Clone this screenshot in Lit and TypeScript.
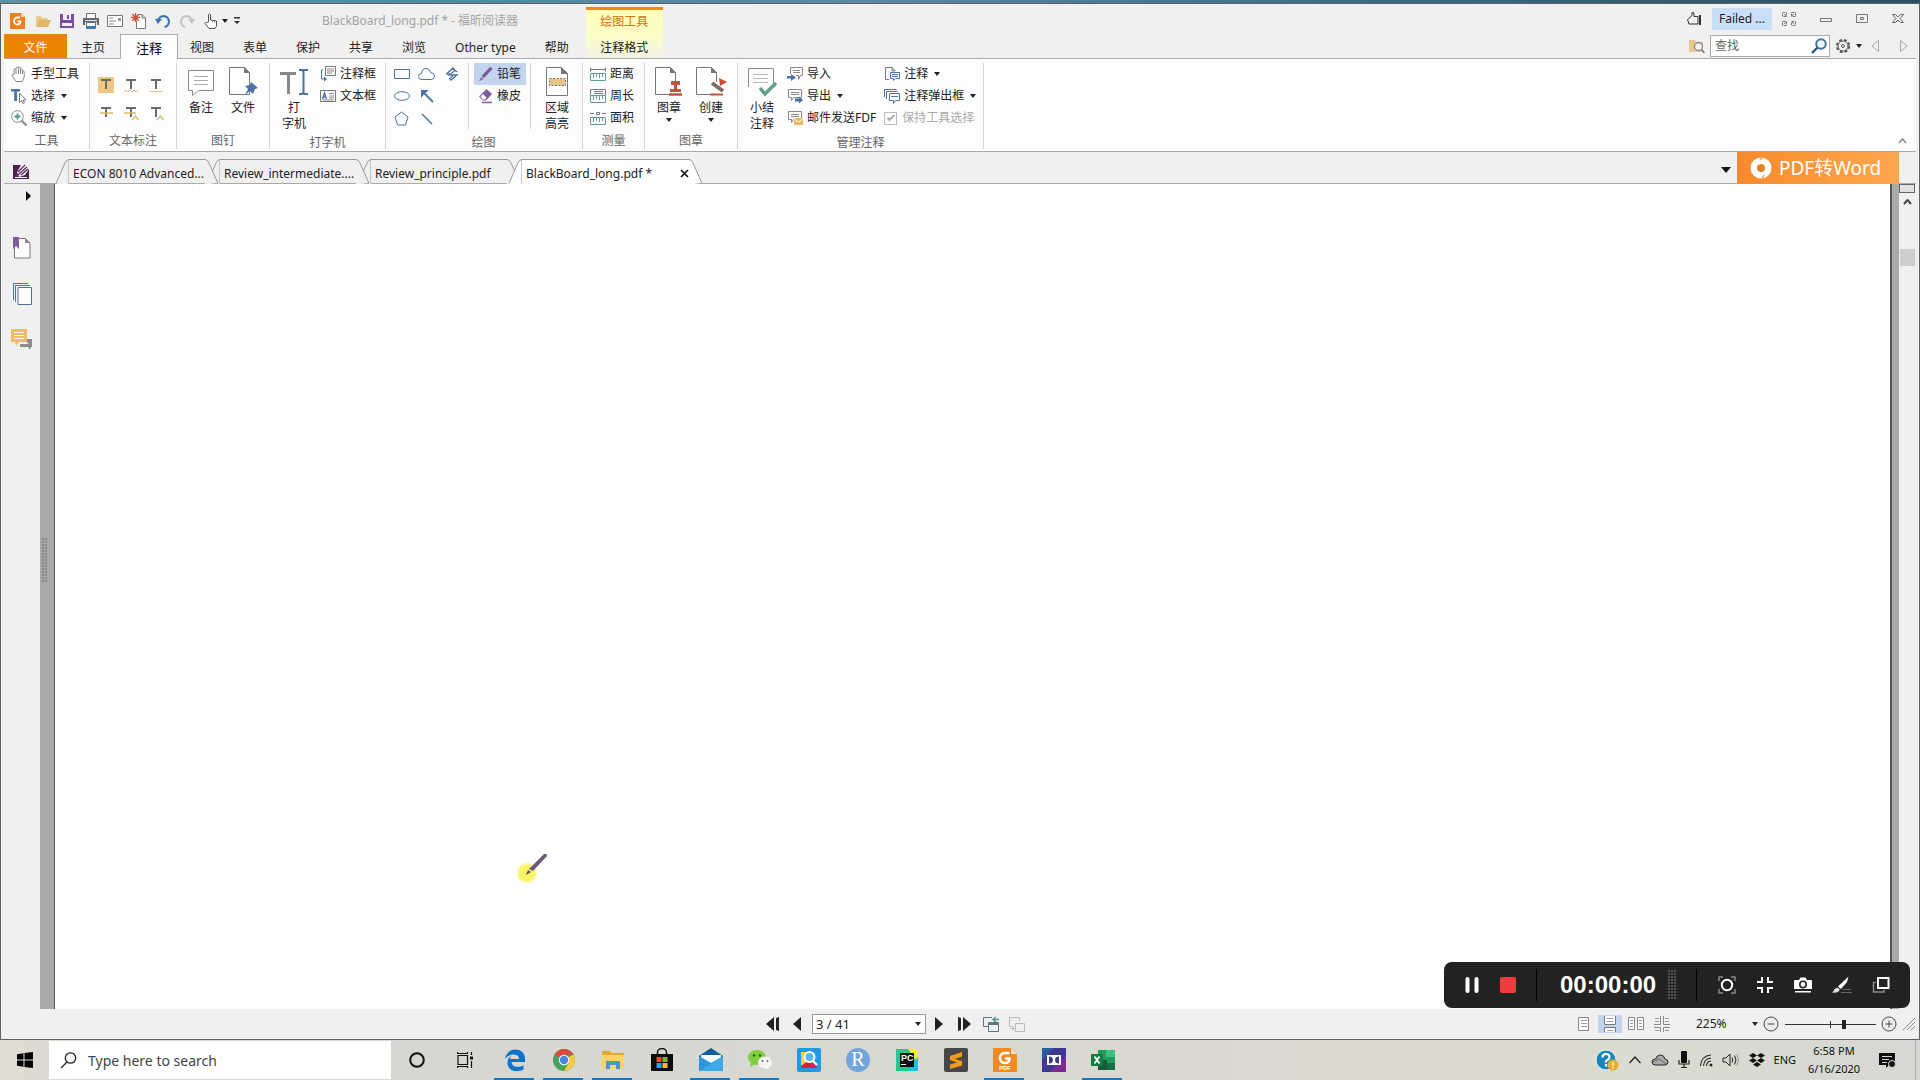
import { LitElement, html, svg, css, nothing, TemplateResult } from "lit";
import { customElement, state } from "lit/decorators.js";
import { classMap } from "lit/directives/class-map.js";

const icon = (w: number, h: number, body: unknown) =>
  html`<svg width=${w} height=${h} viewBox="0 0 ${w} ${h}" fill="none" aria-hidden="true">${body}</svg>`;

const caret = () => icon(6, 4, svg`<path d="M0 0h6L3 4z" fill="#222"/>`);

const G = "#6e6e6e";
const B = "#4a74a3";

/* ---- quick access icons ---- */
const foxitSmall = icon(18, 16, svg`
  <path d="M1 0h11l4 4v12H1z" fill="#ee7f1c"/><path d="M12 0v4h4z" fill="#fbd3a4"/>
  <path d="M11 4.500H8.500a3.500 3.500 0 0 0 0 7c2 0 3-1.200 3-3.200H8.500" stroke="#fff" stroke-width="1.800"/>`);
const folder = icon(16, 16, svg`
  <path d="M1 14V3h5l1 2h6v2" fill="#e9c98c"/><path d="M1 14 4 7h12l-3 7z" fill="#dfb568"/>`);
const save = icon(16, 16, svg`
  <path d="M1 1h14v14H1z" fill="#7c4f9e"/><path d="M4 1h8v6H4z" fill="#f4eefa"/><path d="M8 2h2v4H8z" fill="#7c4f9e"/><path d="M3 10h10v3H3z" fill="#f4eefa"/>`);
const print = icon(16, 16, svg`
  <path d="M3.500 5V.5h9V5" stroke="${G}" fill="#fff"/><path d="M0 5h16v7h-2V9H2v3H0z" fill="#666"/>
  <path d="M3.500 9.500h9v6h-9z" stroke="${B}" fill="#fff"/><path d="M2 7h12v1H2z" fill="#e8eef5"/><path d="M4 13h8v2H4z" fill="${B}"/>`);
const mail = icon(16, 16, svg`
  <path d="M.5 2.500h15v11H.5z" stroke="#777" fill="#fff"/><path d="M2 5h4M2 8h7M2 11h5" stroke="#888"/><path d="M11 5h3v3h-3z" fill="#999"/>`);
const newDoc = icon(16, 16, svg`
  <path d="M5.500 8v7.500h9V5L11 1.500H8" stroke="#777" fill="#fff"/><path d="M11 1.500V5h3.500" stroke="#777"/>
  <path d="M4.500 0v9M0 4.500h9M1.300 1.300l6.400 6.400M7.700 1.300 1.300 7.700" stroke="#c9502e" stroke-width="1.300"/>`);
const undo = icon(16, 16, svg`
  <path d="M3 8a5.500 5.500 0 1 1 6.500 6" stroke="#3b74b4" stroke-width="2.200"/><path d="M0 6h7l-4 5z" fill="#3b74b4"/>`);
const redo = icon(16, 16, svg`
  <path d="M13 8a5.500 5.500 0 1 0-6.500 6" stroke="#c3c5c7" stroke-width="2.200"/><path d="M16 6H9l4 5z" fill="#c3c5c7"/>`);
const touch = icon(16, 16, svg`
  <path d="M5.500 9V1.500q1-1.500 2 0V7l6 1v5l-1.500 2.500H6L2 10.500q0-1.500 1.500-1z" stroke="#555" fill="#fff"/><path d="M9.500 7v2M11.500 7.500v2" stroke="#777"/>`);
const moreCaret = icon(8, 8, svg`<path d="M1 0h6v1.500H1zM1 4h6L4 7z" fill="#333"/>`);

/* ---- header right ---- */
const thumb = icon(16, 16, svg`
  <path d="M1.500 8.500 6 4.500V1.500q2-1 2 1.500v2.500h4v7.500H3z" stroke="#333"/><path d="M13 4h2v10h-2z" fill="#333"/>`);
const expand = icon(14, 14, svg`
  <path d="M.5 4.500v-4h4v4zM9.500 4.500v-4h4v4zM.5 13.500v-4h4v4zM9.500 13.500v-4h4v4z" stroke="#777" stroke-dasharray="3 1"/><path d="m2 2 2 2M12 2l-2 2M2 12l2-2M12 12l-2-2" stroke="#777"/>`);
const minimize = icon(12, 12, svg`<path d="M.5 5.500h11v3H.5z" stroke="#777"/>`);
const restore = icon(12, 12, svg`<path d="M.5 1.500h11v8H.5z" stroke="#777"/><path d="M4.500 4.500h3v2h-3z" stroke="#777"/>`);
const closeWin = icon(12, 12, svg`<path d="M.5 1.500h3L6 4l2.500-2.500h3L8 5.500l3.500 4h-3L6 7 3.500 9.500h-3l3.500-4z" stroke="#666"/>`);
const folderFind = icon(16, 16, svg`
  <path d="M0 14V2h6l1 2h7v10z" fill="#e6c88f"/><circle cx="9.500" cy="8.500" r="4" fill="#f4f4f4" stroke="#888" stroke-width="1.300"/><path d="m12.500 11.500 3 3.500" stroke="#777" stroke-width="1.500"/>`);
const magnify = icon(16, 16, svg`
  <circle cx="10" cy="6" r="4.800" fill="#eef5fb" stroke="#3e7795" stroke-width="2"/><path d="M6.500 9.500 1 15" stroke="#35507c" stroke-width="2.400"/>`);
const gear = icon(16, 16, svg`
  <circle cx="8" cy="8" r="6.200" stroke="#555" stroke-width="1.800" stroke-dasharray="2.900 2"/><circle cx="8" cy="8" r="5" stroke="#555" fill="#f4f4f4"/><circle cx="8" cy="8" r="1.500" stroke="#555"/>`);
const triLeft = icon(9, 14, svg`<path d="M7.500 1.500v11L1 7z" stroke="#aaa"/>`);
const triRight = icon(9, 14, svg`<path d="M1.500 1.500v11L8 7z" stroke="#aaa"/>`);

/* ---- ribbon small icons ---- */
const hand = icon(16, 16, svg`
  <path d="M5 15.500 1 9.500q0-2 2-1V3.500q1-1.500 2 0V2q1-1.500 2 0V1.500q1.200-1.500 2.200 0V3q1.300-1 2 .5V5q1.800-.8 2 1v5l-2 4.500z" stroke="#888" fill="#fff"/><path d="M5 3.500V8M7.500 2.500V8M9.500 3V8M11.500 5v3" stroke="#888"/>`);
const selectI = icon(16, 16, svg`
  <path d="M0 1h9v2.500H6V13H3.200V3.500H0z" fill="${B}"/><path d="M8.500 5v9.500l2-2 1.500 3 1.500-.8L12 12h3z" stroke="#777" fill="#fff"/>`);
const zoomI = icon(16, 16, svg`
  <circle cx="6.500" cy="6.500" r="5.800" stroke="#888" fill="#fff"/><path d="M6.500 3.500v6M3.500 6.500h6" stroke="#4f9587" stroke-width="1.800"/><path d="m10.500 10.500 5 5" stroke="#888" stroke-width="2"/>`);
const noteFrame = icon(16, 16, svg`
  <path d="M5.500.5h10v9h-10z" stroke="#777" fill="#fff"/><path d="M7 3h7M7 5h7M7 7h5" stroke="#888"/><path d="M3 4H1.500v9H5" stroke="${B}"/><path d="M4 10.500v5L7 13z" fill="${B}"/>`);
const textFrame = icon(16, 16, svg`
  <path d="M.5 2.500h15v11H.5z" stroke="#777" fill="#fff"/><path d="m2.500 11 2-6 2 6M3 9h3" stroke="${B}" stroke-width="1.400"/><path d="M9 5.500h5M9 8h5M2.500 12h11M9 10h5" stroke="#888"/>`);
const rectI = icon(16, 12, svg`<path d="M.5 1.500h15v9H.5z" stroke="${B}"/>`);
const cloudI = icon(17, 14, svg`<path d="M4 12.500Q.5 12.500.5 9.500t3-3Q4 1.500 8 1.500t4.500 4q4 .5 4 3.500t-3 3.500z" stroke="${B}"/>`);
const polyline = icon(14, 14, svg`<path d="M1.500 7 8 1l2 2.500L4.500 8H12l-6 5-1.500-1.500L8 9" stroke="${B}" stroke-width="1.300"/><path d="M1.500 7H5M10 3.500 12.500 5" stroke="${B}" stroke-width="1.300"/>`);
const ellipseI = icon(16, 10, svg`<ellipse cx="8" cy="5" rx="7.500" ry="4.300" stroke="${B}"/>`);
const arrowI = icon(14, 14, svg`<path d="m3 3 10 10" stroke="${B}" stroke-width="1.800"/><path d="M1 1h8L6.500 3 3 6.500 1 9z" fill="${B}"/>`);
const pentagon = icon(15, 15, svg`<path d="m7.500 1 6.500 5-2.500 8h-8L1 6z" stroke="${B}"/>`);
const lineI = icon(13, 13, svg`<path d="m2 2 10 10" stroke="${B}" stroke-width="1.400"/>`);
const pencil = icon(16, 16, svg`
  <path d="m3.500 10 8-8.500q2-1 3 1.500l-8.500 9z" fill="#7b5796"/><path d="m3 11 2.500 2L1 15.500z" fill="#8c6ea3"/>`);
const eraser = icon(16, 16, svg`
  <path d="m1 8.500 7.500-7.500L14 6l-6 6.500H5z" fill="#8159a0"/><path d="M2.500 8.500 5 6l3.500 3.500L7 11.500H5z" fill="#fff"/><path d="M4 14.500h10" stroke="#8159a0" stroke-width="1.500"/>`);
const T = "#6b6b6b";
const tBtn = (extra: unknown, box = false) => icon(16, 16, svg`
  ${box ? svg`<path d="M0 0h16v16H0z" fill="#f0c683"/>` : nothing}
  <path d="M3 2h10v2H9v8H7V4H3z" fill="${T}"/>${extra}`);
const tHigh = tBtn(nothing, true);
const tSquig = tBtn(svg`<path d="m1 15 2-2 2 2 2-2 2 2 2-2 2 2 2-2" stroke="#d8bb7d"/>`);
const tUnder = tBtn(svg`<path d="M2 14.500h13" stroke="#e0c68d"/>`);
const tStrike = tBtn(svg`<path d="M2 8h13" stroke="#dcb765" stroke-width="1.500"/>`);
const tReplace = tBtn(svg`<path d="M1 8h12" stroke="#dcb765" stroke-width="1.500"/><path d="m9 15 3.500-4 3 4" stroke="#d9b86e" stroke-width="1.300"/>`);
const tInsert = tBtn(svg`<path d="m9 15 3.500-4 3 4" stroke="#d9b86e" stroke-width="1.300"/>`);
const ruler = (top: unknown) => icon(16, 14, svg`${top}<path d="M.5 6.500h15v7H.5z" stroke="#5f9d90"/><path d="M3.500 7v4M6.500 7v3M9.500 7v4M12.500 7v3" stroke="#5f9d90"/>`);
const distance = ruler(svg`<path d="M.5.5v4M15.500.5v4M1 2.500h14" stroke="#777"/>`);
const perimeter = ruler(svg`<path d="M.5 6V.5h15V6M4 2.500h9M4 4.500h9" stroke="#777"/>`);
const area = ruler(svg`<path d="M0 2.500h4M12 2.500h4M6.500 1.500h3v2h-3z" stroke="#777"/>`);
const bubble = svg`<path d="M1.500 1.500h13v8h-8l-2 3v-3h-3z" stroke="#888" fill="#fff"/><path d="M4 4.500h8M4 6.500h8" stroke="#888"/>`;
const importI = icon(16, 16, svg`
  <path d="M3.500 8V1.500h12v8h-2l-2 4v-4H9" stroke="#888"/><path d="M6 4.500h7M6 6.500h7" stroke="#888"/><path d="M0 10h4V8l5 3.500L4 15v-2.500H0z" fill="${B}"/>`);
const exportI = icon(16, 16, svg`${bubble}<path d="M8 10.500h4V8.500l4 3.500-4 3.500v-2H8z" fill="${B}"/>`);
const mailFdf = icon(16, 16, svg`${bubble}<path d="M7 8h9v7H7z" fill="#e9b95c"/><path d="m7 9 4.500 3L16 9" stroke="#fff"/>`);
const notesI = icon(16, 16, svg`
  <path d="M5 13.500H1.500v-12H8L11.500 5" stroke="#777"/><path d="M8 1.500V5h3" stroke="#777"/><path d="M6.500 6.500h9v6h-4l-2 2v-2h-3z" stroke="${B}" fill="#fff"/><path d="M8 8.500h6M8 10.500h6" stroke="${B}"/>`);
const popups = icon(16, 16, svg`
  <path d="M.5 9V1.500h12M2.500 11V3.500h11" stroke="${B}"/><path d="M5.500 5.500h10v7h-4l-2 3v-3h-4z" stroke="${B}" fill="#fff"/><path d="M7 8.500h7" stroke="${B}"/>`);

/* ---- ribbon large icons ---- */
const page = svg`<path d="M1.500 1.500h15l5 5v22h-20z" stroke="#777" fill="#fff"/><path d="M16 1v6h6z" fill="#777"/>`;
const memo = icon(28, 32, svg`
  <path d="M1.500 4.500h25v20h-15l-6 5v-5h-4z" stroke="#888" fill="#fff"/><path d="M7 10.500h14M7 14.500h14M7 18.500h14" stroke="#aaa"/>`);
const attach = icon(30, 32, svg`
  ${page}<path d="m23 16 7 6-3 1-2 5-3-3-5 4 3-6-3-3 5-1z" fill="${B}"/>`);
const typewriter = icon(30, 32, svg`
  <path d="M1 7.500h16M9.500 8v20" stroke="#888" stroke-width="3"/><path d="M20 4h3l1 1 1-1h4M20 28h3l1-1 1 1h4M24.500 5v22" stroke="${B}" stroke-width="2"/>`);
const areaHi = icon(24, 32, svg`
  <path d="M1.500 1.500h15l6 6v22h-21z" stroke="#777" fill="#fff"/><path d="M16 1v7h7z" fill="#777"/>
  <path d="M4.500 12.500h16v7h-16z" fill="#e8c582" stroke="#777" stroke-dasharray="2 1.500"/>`);
const stamp = icon(30, 32, svg`
  ${page}<path d="M15 15h12v14H15z" fill="#fff"/><path d="M17 15h9v4h-3v4h4v3H16v-3h4v-4h-3z" fill="#c4523f"/><path d="M15 28.500h13" stroke="#c4523f" stroke-width="2.500"/>`);
const createStamp = icon(32, 32, svg`
  <path d="M1.500 1.500h15l5 5v22h-20z" stroke="#777" fill="#fff"/><path d="M16 1v6h6z" fill="#777"/>
  <path d="M15 16h12v13H15z" fill="#fff"/><path d="m24 12 8 4-7 4z" fill="#cf4b33"/><path d="m17 17 11 8" stroke="#7d6a64" stroke-width="4"/><path d="M15 28.500h13" stroke="#b9553f" stroke-width="2"/>`);
const summary = icon(30, 32, svg`
  <path d="M1.500 21V2.500h25V17" stroke="#888"/><path d="M6 8.500h15M6 12.500h15M6 16.500h15" stroke="#bbb"/><path d="m13 22 5 6L29 17" stroke="#5f9d8a" stroke-width="3.500"/>`);

/* ---- side rail ---- */
const bookmark = icon(18, 22, svg`
  <path d="M1.500 1.500h11l4.500 4.500v15H1.500z" stroke="#777" fill="#fff"/><path d="M12 1v5h5z" fill="#888"/><path d="M0 0h6v12l-3-3-3 3z" fill="#7c5c9c"/>`);
const pages = icon(19, 22, svg`
  <path d="M.5 17V.5H15M2.500 19V2.500H17" stroke="${B}"/><path d="M5 4.500h13.500v17H5z" stroke="${B}" fill="#fff"/>`);
const comments = icon(22, 22, svg`
  <path d="M12 10h9v8h-1l-1 3-2-3H9v-3h9z" fill="#8b8b8b"/><path d="M0 0h16v13H8l-3 4-1-4H0z" fill="#ecbb66"/><path d="M3 3.500h10M3 6.500h10M3 9.500h10" stroke="#fff"/>`);
const signPen = icon(18, 16, svg`
  <path d="M1 1h8L5 8l2 5 6-2 4-6v10H1z" fill="#4e2050"/><path d="m6 8 7-7M7 10l8-7M9 11l7-6M3 13l4-3" stroke="#5d2d61" stroke-width="1.300"/><path d="M3 13.500h12" stroke="#fff"/>`);
const convert = icon(24, 24, svg`
  <circle cx="12" cy="12" r="10.500" fill="#fff"/><circle cx="12" cy="12" r="4" fill="#e0822c"/><path d="M12 0v6M13 24l2-5" stroke="#ff9a3c" stroke-width="1.500"/><path d="m10 3 5 3-5 3z" fill="#fff"/>`);

/* ---- status bar ---- */
const navFirst = icon(13, 14, svg`<path d="M8 0v14L0 7zM10 1l3-1v14l-3-1z" fill="#222"/>`);
const navPrev = icon(8, 14, svg`<path d="M8 0v14L0 7z" fill="#222"/>`);
const navNext = icon(8, 14, svg`<path d="M0 0v14l8-7z" fill="#222"/>`);
const navLast = icon(13, 14, svg`<path d="M5 0v14l8-7zM3 1 0 0v14l3-1z" fill="#222"/>`);
const viewBack = icon(16, 16, svg`<path d="M5 10.500H.5v-9H9M5.500 6.500h10v9h-10z" stroke="#5d7686"/><path d="M6 7h9v2H6z" fill="#5d7686"/><path d="M16 3.500h-5M13 1l-3 2.500L13 6" stroke="#4f9587" stroke-width="1.500"/>`);
const viewFwd = icon(16, 16, svg`<path d="M4 10.500H.5v-9h10V5M6.500 7.500h9v8h-9z" stroke="#bbb"/><path d="M1 12.500h4M3.500 10.500l2 2-2 2" stroke="#bbb"/>`);
const lines = (x: number, y: number, n: number, w: number) =>
  Array.from({ length: n }, (_, i) => svg`<path d="M${x} ${y + i * 3}h${w}" stroke="#999"/>`);
const single = icon(12, 16, svg`<path d="M.5 1.500h10v13H.5z" stroke="#888" fill="#fff"/>${lines(3, 4.5, 3, 6)}`);
const continuous = icon(12, 16, svg`<path d="M.5 0v8.500h11V0M.5 16v-4.500h11V16" stroke="#777" fill="#fff"/>${lines(3, 2.5, 2, 6)}<path d="M3 14.500h6" stroke="#999"/>`);
const facing = icon(16, 16, svg`<path d="M.5 1.500h6v12h-6zM9.500 1.500h6v12h-6z" stroke="#888" fill="#fff"/>${lines(2, 4.5, 3, 3)}${lines(11, 4.5, 3, 3)}`);
const facingCont = icon(16, 16, svg`<path d="M0 8.500h6.500V0M16 8.500H9.500V0M0 11.500h6.500V16M16 11.500H9.500V16" stroke="#888"/>${lines(1, 2.5, 2, 4)}${lines(11, 2.5, 2, 4)}${lines(1, 14.5, 1, 4)}${lines(11, 14.5, 1, 4)}`);
const minus = icon(16, 16, svg`<circle cx="8" cy="8" r="7" stroke="#444"/><path d="M4.500 8h7" stroke="#444"/>`);
const plus = icon(16, 16, svg`<circle cx="8" cy="8" r="7" stroke="#444"/><path d="M4.500 8h7M8 4.500v7" stroke="#444"/>`);
const sizeGrip = icon(12, 12, svg`<path d="M0 12 12 0M4 12l8-8M8 12l4-4" stroke="#888"/>`);

/* ---- recorder ---- */
const pause = icon(14, 16, svg`<path d="M2.500 2v12M11.500 2v12" stroke="#fff" stroke-width="4" stroke-linecap="round"/>`);
const stop = icon(16, 16, svg`<rect width="16" height="16" rx="2" fill="#f23b3f"/>`);
const focus = icon(18, 18, svg`<circle cx="9" cy="9" r="5.200" stroke="#fff" stroke-width="2"/><path d="M1 5V1h4M13 1h4v4M17 13v4h-4M5 17H1v-4" stroke="#888" stroke-width="1.500"/>`);
const shrink = icon(18, 18, svg`<path d="M6 1v5H1M12 1v5h5M6 17v-5H1M12 17v-5h5" stroke="#fff" stroke-width="2"/>`);
const camera = icon(18, 16, svg`<path d="M1 3h4l1.500-2.500h5L13 3h4q1 0 1 1v8H0V4q0-1 1-1zM1 14h16v1.500H1z" fill="#fff"/><circle cx="9" cy="7.500" r="3.200" fill="#fff" stroke="#222" stroke-width="1.600"/>`);
const brush = icon(20, 18, svg`<path d="M16.500.5 15 6l-6 7-3-2.500z" fill="#fff"/><path d="M5.500 11.500 8 13.500l-2 2.500q-3 1-6 .500 2-1 2.500-3.500z" fill="#ddd"/><path d="M11 13.500h8M9 16.500h11" stroke="#666"/>`);
const windows = icon(18, 16, svg`<path d="M6 1h10.500v10H6z" stroke="#fff" stroke-width="2"/><path d="M4 5.500H1.500V15H12v-2" stroke="#888" stroke-width="1.500"/>`);

/* ---- task bar ---- */
const winLogo = icon(16, 16, svg`<path d="M0 2.200 6.500 1.300v6.200H0zM7.500 1.100 16 0v7.500H7.500zM0 8.500h6.500v6.200L0 13.800zM7.500 8.500H16V16l-8.500-1.100z" fill="#000"/>`);
const searchI = icon(17, 17, svg`<circle cx="10.500" cy="6" r="5.200" stroke="#222" stroke-width="1.300"/><path d="m7 10-6 6" stroke="#222" stroke-width="1.300"/>`);
const cortana = icon(16, 16, svg`<circle cx="8" cy="8" r="6.800" stroke="#111" stroke-width="2"/>`);
const taskView = icon(17, 16, svg`<path d="M1 3.500h9.500v9H1zM.5 0v2M10.500 0v2M0 1.500h11M.5 16v-2M10.500 16v-2M0 14.500h11M14.500 0v3M14.500 9v7" stroke="#111" stroke-width="1.200"/><path d="M13 4.500h3v3h-3z" fill="#111"/>`);
const edge = icon(22, 22, svg`
  <path d="M1 10C2 4 6 .5 11.500.5 18 .5 21 5 21 9.500V13H7.500c.3 3.300 3 4.800 6 4.800 2.300 0 4.300-.6 6-1.600v4.300c-2 1.100-4.400 1.500-7 1.500-5.500 0-9-3.300-9-8 0-3.700 1.800-6.300 5-7.800-1.700 1-2.200 2.600-2.400 3.800H15c0-2.600-1.400-4.300-4.300-4.300C6.800 5.200 3.300 7 1 10z" fill="#0b73cf"/>`);
const chrome = icon(22, 22, svg`
  <circle cx="11" cy="11" r="11" fill="#4aa35a"/><path d="M11 11 1.500 5.500A11 11 0 0 1 20.500 5.500H11z" fill="#dd4a3c"/><path d="M11 11l9.500-5.500A11 11 0 0 1 11 22l4.500-8z" fill="#f6cb45"/><path d="M11 5.500h9.500l-.5-1H11z" fill="#dd4a3c"/>
  <circle cx="11" cy="11" r="5.200" fill="#fff"/><circle cx="11" cy="11" r="4.200" fill="#4f83e2"/>`);
const explorer = icon(22, 20, svg`
  <path d="M0 1h8l1 2h13v3H0z" fill="#e5a92b"/><path d="M0 5h22v14H0z" fill="#f8d566"/><path d="M4 19v-8h14v8h-4v-4H8v4z" fill="#4c97c4"/>`);
const store = icon(24, 24, svg`
  <path d="M7.500 6V4.500a4.500 4 0 0 1 9 0V6" stroke="#111" stroke-width="1.500"/><path d="M1 6h22v17H1z" fill="#0b0b0b"/>
  <path d="M6.500 9h5v5h-5z" fill="#e8502f"/><path d="M12.500 9h5v5h-5z" fill="#7cb928"/><path d="M6.500 15h5v5h-5z" fill="#2aa1e8"/><path d="M12.500 15h5v5h-5z" fill="#f6b82c"/>`);
const mailApp = icon(24, 24, svg`
  <path d="M0 8 12 0l12 8v3H0z" fill="#155a9c"/><path d="M2 7h20v7H2z" fill="#f6fafd"/><path d="M0 8l12 7 12-7v15H0z" fill="#2a97e0"/><path d="M24 8v15H0z" fill="#43b4ee" fill-opacity=".7"/>`);
const wechat = icon(24, 20, svg`
  <ellipse cx="9" cy="7.500" rx="9" ry="7.500" fill="#7fcf3f"/><path d="m3 12-1 5 5-3z" fill="#7fcf3f"/><circle cx="6" cy="5.500" r="1.200" fill="#2c5a12"/><circle cx="12" cy="5.500" r="1.200" fill="#2c5a12"/>
  <ellipse cx="17" cy="12.500" rx="7" ry="6" fill="#f4f4f4"/><path d="m20 16 1 4-4-2z" fill="#f4f4f4"/><circle cx="14.500" cy="11" r="1" fill="#666"/><circle cx="19.500" cy="11" r="1" fill="#666"/>`);
const finder = icon(24, 24, svg`
  <rect width="24" height="24" rx="2" fill="#2497e3"/><path d="M4 4h5v13H4z" fill="#f7d230"/><path d="M4 20q2-6 8-6t8 6z" fill="#dc1f3e"/>
  <circle cx="12.500" cy="9" r="5" fill="#58b4ee" stroke="#fff" stroke-width="2"/><path d="m16 13 4 4" stroke="#fff" stroke-width="2.400"/>`);
const rBadge = icon(24, 24, svg`
  <circle cx="12" cy="12" r="12" fill="#73a5dc"/><text x="12" y="18" text-anchor="middle" class="serif" fill="#fff">R</text>`);
const pycharm = icon(22, 22, svg`
  <path d="M0 0h14l8 4v18H0z" fill="#22c98a"/><path d="M12 0h10v14z" fill="#f2ea4a"/><path d="M22 8v14H12z" fill="#21bdea"/><path d="M4 4h14v14H4z" fill="#0b0b0b"/>
  <text x="5" y="12" class="tiny" fill="#fff">PC</text><path d="M5 15.500h5" stroke="#fff"/>`);
const sublime = icon(24, 24, svg`
  <rect width="24" height="24" rx="2" fill="#474747"/><path d="m6 8 12-4v4.500L11 11l7 2v4.500L6 21v-4.500l7-2L6 12z" fill="#f79a1c"/>`);
const foxitApp = icon(24, 24, svg`
  <path d="M0 0h18l6 6v18H0z" fill="#ef8a25"/><path d="M18 0v6h6z" fill="#fbe0c0"/>
  <path d="M16.500 5H12a5 5 0 0 0 0 10c3 0 4.500-2 4.500-4.500H12" stroke="#fff" stroke-width="2.600"/><text x="12" y="22" text-anchor="middle" class="tiny pdf" fill="#fff">PDF</text>`);
const dolby = icon(24, 24, svg`
  <path d="M0 0h24v24H0z" fill="#3f3792"/><path d="M0 0h12L0 12z" fill="#2b5ca0"/><path d="M24 8v16H8z" fill="#7c2b8d"/>
  <path d="M5 7h14v10H5z" fill="#fff"/><path d="M7 8.500q4 0 4 3.500t-4 3.500zM17 8.500q-4 0-4 3.500t4 3.500z" fill="#3f3792"/>`);
const excel = icon(24, 22, svg`
  <path d="M7 1h17v20H7z" fill="#1f9c5c"/><path d="M15 1h9v7h-9z" fill="#35c481"/><path d="M7 11h9v10H7z" fill="#175a36"/><path d="M16 14h8v7h-8z" fill="#147243"/><path d="M0 5h12v12H0z" fill="#107c41"/>
  <path d="m3.500 7.500 5 7M8.500 7.500l-5 7" stroke="#fff" stroke-width="1.800"/>`);
const help = icon(24, 22, svg`
  <circle cx="11" cy="11" r="10" fill="#1687bd" stroke="#e6f3fa"/>
  <path d="M7.500 8.500q0-3.500 3.500-3.500t3.500 3q0 2-2 3t-1.500 2.500M11 15v2.500" stroke="#fff" stroke-width="2.200"/>
  <circle cx="18" cy="16" r="5.500" fill="#e8ae2c"/><path d="M18 13v4M18 18v1.200" stroke="#fff" stroke-width="1.400"/>`);
const chevUp = icon(14, 8, svg`<path d="m1.500 7 5.500-6 5.500 6" stroke="#222" stroke-width="1.300"/>`);
const cloud = icon(18, 12, svg`<path d="M4.500 11Q1 11 1 8t3.500-3Q6 1 9.500 1T14 5q3 .5 3 3t-3 3z" fill="#a9a9a9" stroke="#222"/><path d="M2 8 8 5l7 5" stroke="#666"/>`);
const mic = icon(12, 18, svg`<rect x="3" width="6" height="12" rx="1" fill="#111"/><path d="M1 9v4h10V9M6 13v4M3 16.500h6" stroke="#222" stroke-width="1.200"/>`);
const wifi = icon(14, 14, svg`<circle cx="12" cy="12" r="1.500" fill="#222"/><path d="M12 8q-4 0-4.500 5M12 5Q5 5.500 4.500 13M12 2Q2 3 1.500 13" stroke="#222" stroke-width="1.100"/>`);
const sound = icon(18, 14, svg`<path d="M1 5h3l4-4v12L4 9H1z" stroke="#222"/><path d="M10 4.500q1.500 2.500 0 5M12.500 2.500q3 4.500 0 9" stroke="#222"/><path d="M15 1q3 6 0 12" stroke="#999"/>`);
const dropbox = icon(16, 14, svg`<path d="m4 0 4 2.500L4 5 0 2.500zM12 0l4 2.500L12 5 8 2.500zM4 5l4 2.500L4 10 0 7.500zM12 5l4 2.500-4 2.500-4-2.500zM8 9l4 2.500L8 14l-4-2.500z" fill="#111"/>`);
const notify = icon(17, 17, svg`<path d="M0 1h16v12h-6l-3 3v-3H0z" fill="#111"/><path d="M3 4.500h10M3 7.500h7M3 10.500h5" stroke="#d8d8d4"/><circle cx="13" cy="12" r="3.500" fill="#111" stroke="#d8d8d4"/>`);

interface Tool { icon: TemplateResult; label: string; caret?: boolean; active?: boolean; }

const small = (t: Tool) => html`
  <button class=${classMap({ tool: true, active: !!t.active })}>${t.icon}<span>${t.label}</span>${t.caret ? caret() : nothing}</button>`;
const large = (i: TemplateResult, rows: string[], drop = false) => html`
  <button class="large">${i}${rows.map((r) => html`<span>${r}</span>`)}${drop ? caret() : nothing}</button>`;
const iconBtn = (i: TemplateResult, label: string) => html`<button class="ico" aria-label=${label}>${i}</button>`;
const group = (name: string, cls: string, body: unknown) => html`
  <section class="group ${cls}"><div class="body">${body}</div><h2>${name}</h2></section>`;

@customElement("app-root")
export class AppRoot extends LitElement {
  @state() private zoom = 65;

  static styles = css`
    :host { display: flex; flex-direction: column; height: 100vh; position: relative; overflow: hidden;
      font: 12px/16px "Noto Sans", "Noto Sans CJK SC", sans-serif; color: #222;
      background: linear-gradient(90deg, #5b93a3, #4c8ba0 25%, #5c87a5 45%, #39677f 75%, #2a5262 100%); }
    *, *::before { box-sizing: border-box; }
    button, input, select { font: inherit; color: inherit; margin: 0; padding: 0; border: 0; background: none; border-radius: 0; }
    button { display: inline-flex; align-items: center; justify-content: center; white-space: nowrap; }
    svg { display: block; flex: none; }
    h1, h2 { margin: 0; font: inherit; }
    .window { flex: 1; min-height: 0; display: flex; flex-direction: column; margin-top: 3px;
      border: 1px solid #5a6266; background: #f0f0f0; }

    header { display: flex; height: 54px; margin: 0 3px; flex: none; }
    .left { display: flex; flex-direction: column; }
    .titlebar { display: flex; align-items: center; height: 30px; padding: 4px 0 0 5px; }
    .quick { display: flex; align-items: center; gap: 8px; }
    .quick .drop { gap: 3px; }
    .quick .ico:last-child { margin-left: -3px; }
    h1 { margin-left: 81px; color: #a3a3a3; white-space: nowrap; }
    .tabs { display: flex; flex: 1; }
    .tabs button { padding: 3px 14px 0; margin-right: 1px; }
    .tabs .file { width: 63px; margin-right: 0; background: #e98300; color: #fff; }
    .tabs .current { position: relative; font-size: 13px; width: 58px; padding: 2px 0 0; margin: 0 -2px -1px 0; background: #fdfdfd; border: 1px solid #aaa; border-bottom: 0; color: #000; }
    .context { display: flex; flex-direction: column; align-items: center; width: 77px; margin: 3px 0 0 2px;
      border-top: 3px solid #e98a17; background: linear-gradient(#ffffb9, #fdfdc6 50%, #f2f2e6); }
    .context span { line-height: 24px; color: #dd6b10; }
    .context button { flex: 1; padding-top: 3px; }
    .right { margin-left: auto; display: flex; flex-direction: column; }
    .winctl { display: flex; align-items: center; justify-content: flex-end; height: 26px; padding: 3px 12px 0 0; gap: 24px; }
    .winctl .account { height: 22px; width: 60px; margin: 0 -14px; background: #c8def9; }
    .find { display: flex; align-items: center; justify-content: flex-end; flex: 1; gap: 5px; padding: 3px 8px 0 0; }
    .box { display: flex; align-items: center; width: 120px; height: 22px; border: 1px solid #aaa; background: #fff; padding: 0 2px 0 4px; }
    .box input { flex: 1; min-width: 0; outline: 0; }
    .box input::placeholder { color: #666; opacity: 1; }
    .find .next { margin-left: 14px; }
    .find .prev { margin-left: 4px; }

    .ribbon { display: flex; flex: none; height: 94px; margin: 0 3px; padding: 4px 0 2px; background: #fdfdfd;
      border-top: 1px solid #aaa; border-bottom: 1px solid #aaa; }
    .group { display: flex; flex-direction: column; border-right: 1px solid #d4d4d4; padding: 0 7px; }
    .group h2 { line-height: 18px; padding-top: 2px; margin-bottom: -1px; text-align: center; color: #666; }
    .body { flex: 1; display: flex; }
    .stack { display: flex; flex-direction: column; align-items: flex-start; }
    .tool { height: 22px; gap: 4px; }
    .tool > svg:last-child:not(:first-child) { margin-left: 2px; }
    .active { background: #c2d4f0; }
    .large { flex-direction: column; justify-content: flex-start; padding-top: 3px; width: 42px; }
    .large span { line-height: 16px; }
    .large svg:first-child { margin-bottom: 2px; }
    .large svg:last-child { margin-top: 2px; }
    .g-tool { width: 86px; }
    .g-text { width: 87px; }
    .g-pin { width: 93px; padding: 0 3px; }
    .g-type { width: 116px; padding: 0 3px; }
    .g-draw { width: 197px; padding: 0 4px 0 3px; }
    .g-measure { width: 62px; }
    .g-stamp { width: 93px; padding: 0 3px; }
    .g-manage { width: 246px; padding: 0 3px; }
    .g-type .stack { margin-left: 5px; }
    .g-manage .stack { margin-left: 4px; }
    .g-manage .stack + .stack { margin-left: 8px; }
    .marks { display: grid; grid-template-columns: repeat(3, 25px); grid-template-rows: 28px 28px; padding-top: 8px; margin-left: -4px; }
    .shapes { display: grid; grid-template-columns: repeat(3, 25px); grid-template-rows: repeat(3, 22px); }
    .rule { width: 1px; height: 66px; background: #d4d4d4; margin: 0 5px 0 4px; }
    .g-draw .tool { padding: 0 5px 0 4px; gap: 3px; }
    .g-draw .large { margin: 0 auto; }
    .keep { display: flex; align-items: center; height: 22px; gap: 5px; color: #aaa; }
    .keep input { appearance: none; width: 13px; height: 13px; border: 1px solid #bbb; background: #fff; display: grid; place-items: center; }
    .keep input::before { content: ""; width: 8px; height: 4px; border: solid #aaa; border-width: 0 0 2px 2px; rotate: -45deg; translate: 0 -1px; }
    .fold { margin: auto 9px 5px auto; }

    .docs { display: flex; align-items: flex-end; flex: none; height: 32px; margin: 0 3px; position: relative; border-bottom: 1px solid #aaa; }
    .docs > .pen { align-self: center; margin: 8px 26px 0 8px; }
    .doc { display: flex; width: 162px; height: 25px; margin: 0 -11px -1px 0; position: relative; --face: #f0f0f0; }
    .doc:nth-of-type(1) { z-index: 3; }
    .doc:nth-of-type(2) { z-index: 2; }
    .doc:nth-of-type(3) { z-index: 1; }
    .doc.front { width: 193px; z-index: 4; --face: #fff; }
    .doc .face { flex: 1; min-width: 0; display: flex; align-items: center; justify-content: space-between; padding-top: 4px;
      border-top: 1px solid #999; border-bottom: 1px solid #aaa; background: var(--face); }
    .doc.front .face { border-bottom-color: #fff; }
    .doc .name { margin: 0 -8px 0 4px; position: relative; }
    .slope path { fill: var(--face); stroke: #999; }
    .promo { display: flex; align-items: center; gap: 6px; width: 162px; height: 32px; padding-left: 12px; margin: 0 17px -1px 0;
      background: linear-gradient(90deg, #f78a2d, #ffa74d); color: #fff; font-size: 19px; text-decoration: none; white-space: nowrap; }
    .docs > .list { margin: 0 6px 10px auto; }

    .main { flex: 1; min-height: 0; display: flex; }
    .rail { width: 39px; display: flex; flex-direction: column; align-items: center; gap: 24px; padding-top: 6px; }
    .rail .open { margin: 0 0 11px 17px; }
    .rail .ico { margin-left: 3px; }
    .gutter { width: 15px; background: #a9a9a9; border-right: 1px solid #555; display: flex; align-items: center; padding-left: 2px; }
    .dots { width: 5px; height: 44px; background: radial-gradient(circle at 1px 1px, #888 1px, transparent 1px) 0 0 / 3px 3px; margin-bottom: 74px; }
    .paper { flex: 1; background: #fff; position: relative; }
    .edge { width: 9px; background: #a9a9a9; border-left: 2px solid #555; }
    .scroll { width: 16px; margin-right: 4px; display: flex; flex-direction: column; align-items: center; }
    .scroll .split { width: 16px; height: 9px; border: 1px solid #666; background: #e2e2e2; }
    .scroll svg { margin: 6px 0; }
    .scroll .thumb { width: 15px; height: 17px; background: #cdcdcd; margin-top: 38px; }
    .cursor { position: absolute; left: 457px; top: 665px; }
    .glow { fill: #f8f465; filter: blur(1px); }

    .status { display: flex; align-items: center; height: 30px; flex: none; padding-right: 4px; }
    .nav { display: flex; align-items: center; margin-left: 765px; }
    .nav .prev { margin: 0 11px 0 14px; }
    .nav .next { margin: 0 15px 0 9px; }
    .nav .hist { margin-left: 12px; gap: 10px; display: flex; }
    .pick { display: flex; align-items: center; position: relative; }
    .pick select { appearance: none; width: 114px; height: 20px; padding-left: 3px; font-size: 13px; border: 1px solid #999; background: #fff; outline: 0; }
    .pick svg { margin-left: -11px; margin-right: 5px; pointer-events: none; }
    .view { display: flex; align-items: center; margin-left: auto; }
    .view .mode { width: 24px; height: 18px; margin-right: 2px; }
    .view .pct { appearance: none; width: 56px; outline: 0; }
    .view .pct + svg { margin-right: 5px; }
    .modes { display: flex; margin-right: 20px; }
    .level { appearance: none; width: 91px; height: 16px; margin: 0 5px 0 6px;
      background: linear-gradient(#333, #333) 50% 50% / 1px 7px no-repeat, linear-gradient(#333, #333) 50% 50% / 100% 1px no-repeat; }
    .level::-webkit-slider-thumb { appearance: none; width: 4px; height: 9px; background: #222; }
    .grip { margin-left: 6px; }

    .taskbar { display: flex; align-items: center; height: 40px; flex: none; background: linear-gradient(90deg, #e0ddd0, #d6d6d2 6%, #d9d8d1 55%, #dedccf 78%, #d5d8d4); }
    .start { width: 49px; height: 40px; }
    .search { display: flex; align-items: center; align-self: stretch; width: 342px; margin: 1px 1px 1px 0; background: #fff; padding: 1px 0 0 11px; gap: 11px; }
    .search input { flex: 1; font-size: 14px; line-height: 20px; outline: 0; }
    .search input::placeholder { color: #444; opacity: 1; }
    .app { width: 49px; height: 40px; position: relative; }
    .app.running::after { content: ""; position: absolute; left: 4px; right: 5px; bottom: 0; height: 2px; background: #1878bf; }
    .serif { font: 20px "Liberation Serif", serif; }
    .tiny { font: bold 9px "Liberation Sans", sans-serif; }
    .pdf { font-size: 6px; }
    .tray { display: flex; align-items: center; margin-left: auto; font-size: 11px; color: #111; gap: 9px; }
    .tray .lang { margin-right: 1px; }
    .clock { flex-direction: column; width: 56px; }
    .clock span { line-height: 18px; }
    .tray .note { margin: 0 10px 0 8px; }
    .peek { width: 5px; height: 40px; border-left: 1px solid #aaa; }

    .recorder { position: absolute; right: 10px; bottom: 72px; height: 46px; width: 466px; padding: 0 20px 0 21px;
      display: flex; align-items: center; background: #222; border-radius: 8px; color: #fff; }
    .recorder .bar { width: 1px; height: 32px; background: #000; margin: 0 20px; }
    .recorder .main-ctl { display: flex; align-items: center; gap: 21px; }
    .recorder .extra { display: flex; align-items: center; gap: 20px; margin-left: auto; }
    .recorder .timer { display: flex; align-items: center; gap: 12px; margin-left: 3px; }
    .recorder time { font: bold 24px/30px "Liberation Sans", sans-serif; }
    .meter { width: 8px; height: 30px; background: radial-gradient(circle at 1px 1px, #555 1px, transparent 1px) 0 0 / 3px 3px; }
  `;

  private doc(name: string, front = false) {
    return html`<div class="doc ${front ? "front" : ""}">
      <svg class="slope" width="13" height="25"><path d="M0 24.500 9 4Q10.500.5 13 .5V26" /></svg>
      <div class="face"><button class="name">${name}</button>
        ${front ? html`<button aria-label="关闭">${icon(9, 9, svg`<path d="m1 1 7 7M8 1 1 8" stroke="#111" stroke-width="1.700"/>`)}</button>` : nothing}
      </div>
      <svg class="slope" width="13" height="25"><path d="M0 .5Q2.500.5 4 4l9 20.500L0 26" /></svg>
    </div>`;
  }

  private header() {
    return html`<header>
      <div class="left">
        <div class="titlebar">
          <div class="quick">
            ${iconBtn(foxitSmall, "福昕阅读器")}${iconBtn(folder, "打开")}${iconBtn(save, "保存")}${iconBtn(print, "打印")}
            ${iconBtn(mail, "邮件")}${iconBtn(newDoc, "新建")}${iconBtn(undo, "撤销")}${iconBtn(redo, "重做")}
            <button class="drop" aria-label="触摸模式">${touch}${caret()}</button>${iconBtn(moreCaret, "自定义")}
          </div>
          <h1>BlackBoard_long.pdf * - 福昕阅读器</h1>
        </div>
        <nav class="tabs">
          <button class="file">文件</button><button>主页</button><button class="current">注释</button>
          ${["视图", "表单", "保护", "共享", "浏览", "Other type", "帮助"].map((t) => html`<button>${t}</button>`)}
        </nav>
      </div>
      <div class="context"><span>绘图工具</span><button>注释格式</button></div>
      <div class="right">
        <div class="winctl">
          ${iconBtn(thumb, "赞")}<button class="account">Failed ...</button>${iconBtn(expand, "全屏")}
          ${iconBtn(minimize, "最小化")}${iconBtn(restore, "还原")}${iconBtn(closeWin, "关闭")}
        </div>
        <div class="find">
          ${iconBtn(folderFind, "高级查找")}
          <div class="box"><input type="text" placeholder="查找" aria-label="查找" /><button aria-label="搜索">${magnify}</button></div>
          <button class="ico" aria-label="查找设置">${gear}</button>${caret()}
          <button class="prev" aria-label="上一个">${triLeft}</button><button class="next" aria-label="下一个">${triRight}</button>
        </div>
      </div>
    </header>`;
  }

  private ribbon() {
    return html`<div class="ribbon">
      ${group("工具", "g-tool", html`<div class="stack">
        ${[{ icon: hand, label: "手型工具" }, { icon: selectI, label: "选择", caret: true }, { icon: zoomI, label: "缩放", caret: true }].map(small)}</div>`)}
      ${group("文本标注", "g-text", html`<div class="marks">
        ${iconBtn(tHigh, "高亮")}${iconBtn(tSquig, "波浪线")}${iconBtn(tUnder, "下划线")}
        ${iconBtn(tStrike, "删除线")}${iconBtn(tReplace, "替换")}${iconBtn(tInsert, "插入")}</div>`)}
      ${group("图钉", "g-pin", html`${large(memo, ["备注"])}${large(attach, ["文件"])}`)}
      ${group("打字机", "g-type", html`${large(typewriter, ["打", "字机"])}
        <div class="stack">${[{ icon: noteFrame, label: "注释框" }, { icon: textFrame, label: "文本框" }].map(small)}</div>`)}
      ${group("绘图", "g-draw", html`
        <div class="shapes">
          ${iconBtn(rectI, "矩形")}${iconBtn(cloudI, "云形")}${iconBtn(polyline, "折线")}
          ${iconBtn(ellipseI, "椭圆")}${iconBtn(arrowI, "箭头")}<span></span>
          ${iconBtn(pentagon, "多边形")}${iconBtn(lineI, "直线")}
        </div><div class="rule"></div>
        <div class="stack">${[{ icon: pencil, label: "铅笔", active: true }, { icon: eraser, label: "橡皮" }].map(small)}</div>
        <div class="rule"></div>${large(areaHi, ["区域", "高亮"])}`)}
      ${group("测量", "g-measure", html`<div class="stack">
        ${[{ icon: distance, label: "距离" }, { icon: perimeter, label: "周长" }, { icon: area, label: "面积" }].map(small)}</div>`)}
      ${group("图章", "g-stamp", html`${large(stamp, ["图章"], true)}${large(createStamp, ["创建"], true)}`)}
      ${group("管理注释", "g-manage", html`${large(summary, ["小结", "注释"])}
        <div class="stack">${[{ icon: importI, label: "导入" }, { icon: exportI, label: "导出", caret: true }, { icon: mailFdf, label: "邮件发送FDF" }].map(small)}</div>
        <div class="stack">${[{ icon: notesI, label: "注释", caret: true }, { icon: popups, label: "注释弹出框", caret: true }].map(small)}
          <label class="keep"><input type="checkbox" checked disabled />保持工具选择</label></div>`)}
      <button class="fold" aria-label="折叠功能区">${icon(9, 6, svg`<path d="m1 5 3.500-4L8 5" stroke="#888" stroke-width="1.500"/>`)}</button>
    </div>`;
  }

  private status() {
    return html`<footer class="status">
      <div class="nav">
        ${iconBtn(navFirst, "第一页")}<button class="prev" aria-label="上一页">${navPrev}</button>
        <div class="pick"><select aria-label="页码"><option>3 / 41</option></select>${caret()}</div>
        <button class="next" aria-label="下一页">${navNext}</button>${iconBtn(navLast, "最后一页")}
        <div class="hist">${iconBtn(viewBack, "上一视图")}${iconBtn(viewFwd, "下一视图")}</div>
      </div>
      <div class="view">
        <div class="modes">
          <button class="mode" aria-label="单页">${single}</button><button class="mode active" aria-label="连续">${continuous}</button>
          <button class="mode" aria-label="双页">${facing}</button><button class="mode" aria-label="双页连续">${facingCont}</button>
        </div>
        <select class="pct" aria-label="缩放比例"><option>225%</option></select>${caret()}
        ${iconBtn(minus, "缩小")}
        <input class="level" type="range" aria-label="缩放" min="0" max="100" .value=${String(this.zoom)}
          @input=${(e: Event) => (this.zoom = Number((e.target as HTMLInputElement).value))} />
        ${iconBtn(plus, "放大")}<span class="grip">${sizeGrip}</span>
      </div>
    </footer>`;
  }

  private taskbar() {
    const apps: [string, TemplateResult, boolean][] = [
      ["Cortana", cortana, false], ["Task View", taskView, false], ["Edge", edge, true], ["Chrome", chrome, true],
      ["File Explorer", explorer, true], ["Store", store, false], ["Mail", mailApp, true], ["WeChat", wechat, true],
      ["Finder", finder, false], ["R", rBadge, false], ["PyCharm", pycharm, false], ["Sublime Text", sublime, false],
      ["Foxit", foxitApp, true], ["Dolby", dolby, false], ["Excel", excel, true],
    ];
    return html`<div class="taskbar">
      <button class="start" aria-label="Start">${winLogo}</button>
      <label class="search">${searchI}<input type="text" placeholder="Type here to search" aria-label="Search" /></label>
      ${apps.map(([n, i, on]) => html`<button class=${classMap({ app: true, running: on })} aria-label=${n}>${i}</button>`)}
      <div class="tray">
        ${iconBtn(help, "Help")}${iconBtn(chevUp, "Hidden icons")}${iconBtn(cloud, "OneDrive")}${iconBtn(mic, "Microphone")}
        ${iconBtn(wifi, "Network")}${iconBtn(sound, "Volume")}${iconBtn(dropbox, "Dropbox")}
        <button class="lang">ENG</button><button class="clock"><span>6:58 PM</span><span>6/16/2020</span></button>
        <button class="note" aria-label="Notifications">${notify}</button><button class="peek" aria-label="Show desktop"></button>
      </div>
    </div>`;
  }

  render() {
    return html`
      <div class="window">
        ${this.header()}${this.ribbon()}
        <div class="docs">
          <button class="pen" aria-label="签名">${signPen}</button>
          ${this.doc("ECON 8010 Advanced...")}${this.doc("Review_intermediate....")}${this.doc("Review_principle.pdf")}${this.doc("BlackBoard_long.pdf *", true)}
          <button class="list" aria-label="文档列表">${icon(10, 6, svg`<path d="M0 0h10L5 6z" fill="#111"/>`)}</button>
          <a class="promo" href="#word">${convert}PDF转Word</a>
        </div>
        <div class="main">
          <aside class="rail">
            <button class="open" aria-label="展开">${icon(6, 12, svg`<path d="M0 1v10l5-5z" fill="#111"/>`)}</button>
            ${iconBtn(bookmark, "书签")}${iconBtn(pages, "页面")}${iconBtn(comments, "注释")}
          </aside>
          <div class="gutter"><div class="dots"></div></div>
          <div class="paper">
            <svg class="cursor" width="40" height="36" viewBox="0 0 40 36">
              <circle class="glow" cx="15" cy="24" r="9.500" />
              <path d="m17 20 15-15q3-1 3 2L21 22z" fill="#6c5a78" /><path d="m16 21 3 2-5 3z" fill="#5f4f55" />
            </svg>
          </div>
          <div class="edge"></div>
          <div class="scroll"><div class="split"></div>${icon(9, 6, svg`<path d="m1 5 3.500-4L8 5" stroke="#444" stroke-width="2"/>`)}<div class="thumb"></div></div>
        </div>
        ${this.status()}
      </div>
      ${this.taskbar()}
      <div class="recorder">
        <div class="main-ctl">${iconBtn(pause, "Pause")}${iconBtn(stop, "Stop")}</div>
        <div class="bar"></div>
        <div class="timer"><time>00:00:00</time><div class="meter"></div></div>
        <div class="bar"></div>
        <div class="extra">${iconBtn(focus, "Spotlight")}${iconBtn(shrink, "Exit full screen")}${iconBtn(camera, "Screenshot")}${iconBtn(brush, "Draw")}${iconBtn(windows, "Windows")}</div>
      </div>`;
  }
}
